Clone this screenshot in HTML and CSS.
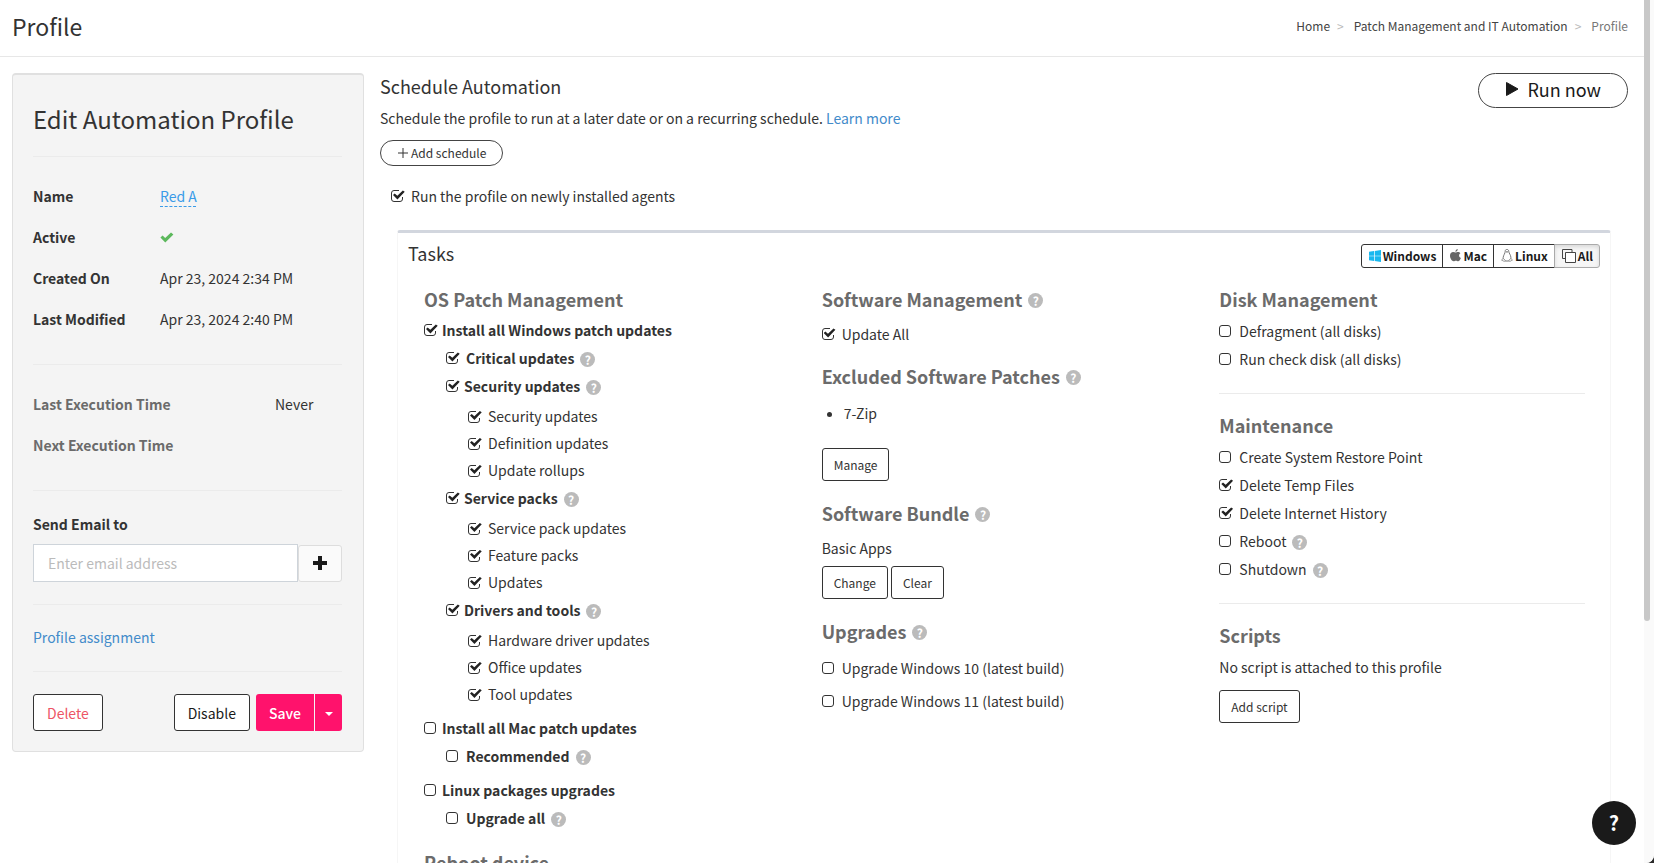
FILE: index.html
```html
<!DOCTYPE html>
<html lang="en">
<head>
    <meta charset="UTF-8">
    <meta name="viewport" content="width=device-width, initial-scale=1.0">
    <title>Profile</title>
    <link rel="stylesheet" href="styles.css">
</head>
<body>
    <header class="page-header">
        <h1>Profile</h1>
        <nav class="breadcrumb">
            <a href="#">Home</a>
            <span class="sep">&gt;</span>
            <a href="#">Patch Management and IT Automation</a>
            <span class="sep">&gt;</span>
            <span class="current">Profile</span>
        </nav>
    </header>

    <div class="content">
        <!-- Left card with the profile details -->
        <aside class="sidebar">
            <h2>Edit Automation Profile</h2>

            <dl class="details">
                <dt>Name</dt>
                <dd><a href="#" class="editable">Red A</a></dd>
                <dt>Active</dt>
                <dd>
                    <svg class="icon-check" width="14" height="11" viewBox="0 0 14 11"><path d="M0.4 5.6 2.6 3.4 5.2 6 11 0.4 13.4 2.6 5.3 10.6Z" fill="#5cb85c"/></svg>
                </dd>
                <dt>Created On</dt>
                <dd>Apr 23, 2024 2:34 PM</dd>
                <dt>Last Modified</dt>
                <dd>Apr 23, 2024 2:40 PM</dd>
            </dl>

            <dl class="details execution">
                <dt>Last Execution Time</dt>
                <dd>Never</dd>
                <dt>Next Execution Time</dt>
                <dd></dd>
            </dl>

            <div class="email">
                <label for="email">Send Email to</label>
                <div class="email-row">
                    <input type="email" id="email" placeholder="Enter email address">
                    <button type="button" class="email-add" aria-label="Add email">
                        <svg width="14" height="14" viewBox="0 0 14 14"><path d="M5 0h4v5h5v4H9v5H5V9H0V5h5z" fill="#1a1a1a"/></svg>
                    </button>
                </div>
            </div>

            <div class="assignment">
                <a href="#">Profile assignment</a>
            </div>

            <div class="actions">
                <button type="button" class="btn btn-delete">Delete</button>
                <div class="actions-right">
                    <button type="button" class="btn">Disable</button>
                    <div class="save-group">
                        <button type="button" class="btn-save">Save</button>
                        <button type="button" class="btn-save btn-caret" aria-label="More save options">
                            <svg width="8" height="4" viewBox="0 0 8 4"><path d="M0 0h8L4 4z" fill="#fff"/></svg>
                        </button>
                    </div>
                </div>
            </div>
        </aside>

        <main class="main">
            <section class="schedule">
                <div>
                    <h3>Schedule Automation</h3>
                    <p>Schedule the profile to run at a later date or on a recurring schedule. <a href="#">Learn more</a></p>
                    <button type="button" class="btn-pill">
                        <svg width="10" height="10" viewBox="0 0 10 10"><path d="M5 0v10M0 5h10" stroke="#333" stroke-width="1"/></svg>
                        Add schedule
                    </button>
                </div>
                <button type="button" class="btn-pill btn-run">
                    <svg width="12" height="14" viewBox="0 0 12 14"><path d="M0.5 0.5v13L12 7z" fill="#1a1a1a" stroke="#1a1a1a" stroke-linejoin="round"/></svg>
                    Run now
                </button>
            </section>

            <label class="check run-new"><input type="checkbox" checked> Run the profile on newly installed agents</label>

            <section class="tasks">
                <div class="tasks-header">
                    <h3>Tasks</h3>
                    <div class="os-filter">
                        <button type="button">
                            <svg width="12" height="12" viewBox="0 0 12 12"><path d="M0 1.8 5 1v4.7H0zM5.7.9 12 0v5.7H5.7zM0 6.3h5V11l-5-.8zM5.7 6.3H12V12l-6.3-.9z" fill="#19b8ef"/></svg>
                            Windows
                        </button>
                        <button type="button">
                            <svg width="11" height="13" viewBox="0 0 11 13"><path d="M7.7 0c.1 1.300-.9 2.700-2.300 2.800C5.200 1.500 6.400.2 7.700 0zM5.600 3.600c.6 0 1.300-.6 2.400-.6 1 0 1.900.5 2.400 1.300-2 1.200-1.700 3.900.5 4.700-.5 1.300-1.600 3.300-2.800 3.300-.8 0-1.200-.5-2.200-.5s-1.400.5-2.200.5C1.900 12.300 0 9.300 0 6.800 0 4.400 1.500 3.100 3.100 3.100c1.100 0 1.900.5 2.500.5z" fill="#666"/></svg>
                            Mac
                        </button>
                        <button type="button">
                            <svg width="12" height="13" viewBox="0 0 12 13"><path d="M4.200 2.300C4.200 1 4.900.4 6 .4s1.700.8 1.800 2.200c.1 1.700 2 3.300 2.100 5.800 0 .8-.2 1.200-.4 1.800L7.400 12H4.600L2.500 10.200c-.3-.6-.4-1-.3-1.800.2-2.300 2-3.900 2-6.100z" fill="#fff" stroke="#777" stroke-width="1"/><path d="M5 2.600h2L6 3.700zM.5 11l1.900-1.600L4.500 12l-1 .6zM11.500 11 9.700 9.400 7.600 12l1 .6z" fill="#fff" stroke="#888" stroke-width=".8"/></svg>
                            Linux
                        </button>
                        <button type="button" class="active">
                            <svg width="14" height="14" viewBox="0 0 14 14"><path d="M3 9.500H.5v-9h9.500V3" fill="none" stroke="#444"/><path d="M3.500 3.500h10v10h-10z" fill="#fff" stroke="#444"/></svg>
                            All
                        </button>
                    </div>
                </div>

                <div class="columns">
                    <div class="column">
                        <h4>OS Patch Management</h4>
                        <ul class="tree">
                            <li>
                                <label class="check"><input type="checkbox" checked>Install all Windows patch updates</label>
                                <ul>
                                    <li><label class="check wide"><input type="checkbox" checked>Critical updates</label><span class="help">?</span></li>
                                    <li>
                                        <label class="check"><input type="checkbox" checked>Security updates</label><span class="help">?</span>
                                        <ul class="leaves">
                                            <li><label class="check wide"><input type="checkbox" checked>Security updates</label></li>
                                            <li><label class="check wide"><input type="checkbox" checked>Definition updates</label></li>
                                            <li><label class="check wide"><input type="checkbox" checked>Update rollups</label></li>
                                        </ul>
                                    </li>
                                    <li>
                                        <label class="check"><input type="checkbox" checked>Service packs</label><span class="help">?</span>
                                        <ul class="leaves">
                                            <li><label class="check wide"><input type="checkbox" checked>Service pack updates</label></li>
                                            <li><label class="check wide"><input type="checkbox" checked>Feature packs</label></li>
                                            <li><label class="check wide"><input type="checkbox" checked>Updates</label></li>
                                        </ul>
                                    </li>
                                    <li>
                                        <label class="check"><input type="checkbox" checked>Drivers and tools</label><span class="help">?</span>
                                        <ul class="leaves">
                                            <li><label class="check wide"><input type="checkbox" checked>Hardware driver updates</label></li>
                                            <li><label class="check wide"><input type="checkbox" checked>Office updates</label></li>
                                            <li><label class="check wide"><input type="checkbox" checked>Tool updates</label></li>
                                        </ul>
                                    </li>
                                </ul>
                            </li>
                            <li>
                                <label class="check"><input type="checkbox">Install all Mac patch updates</label>
                                <ul>
                                    <li><label class="check wide"><input type="checkbox">Recommended</label><span class="help">?</span></li>
                                </ul>
                            </li>
                            <li>
                                <label class="check"><input type="checkbox">Linux packages upgrades</label>
                                <ul>
                                    <li><label class="check wide"><input type="checkbox">Upgrade all</label><span class="help">?</span></li>
                                </ul>
                            </li>
                        </ul>
                        <h4 class="next">Reboot device</h4>
                    </div>

                    <div class="column software">
                        <section>
                            <h4>Software Management <span class="help">?</span></h4>
                            <label class="check wide"><input type="checkbox" checked>Update All</label>
                        </section>
                        <section>
                            <h4>Excluded Software Patches <span class="help">?</span></h4>
                            <ul class="excluded">
                                <li>7-Zip</li>
                            </ul>
                            <button type="button" class="btn-small">Manage</button>
                        </section>
                        <section>
                            <h4>Software Bundle <span class="help">?</span></h4>
                            <p>Basic Apps</p>
                            <div class="btn-row">
                                <button type="button" class="btn-small">Change</button>
                                <button type="button" class="btn-small">Clear</button>
                            </div>
                        </section>
                        <section class="upgrades">
                            <h4>Upgrades <span class="help">?</span></h4>
                            <label class="check wide"><input type="checkbox">Upgrade Windows 10 (latest build)</label>
                            <label class="check wide"><input type="checkbox">Upgrade Windows 11 (latest build)</label>
                        </section>
                    </div>

                    <div class="column system">
                        <section>
                            <h4>Disk Management</h4>
                            <div class="option"><label class="check wide"><input type="checkbox">Defragment (all disks)</label></div>
                            <div class="option"><label class="check wide"><input type="checkbox">Run check disk (all disks)</label></div>
                        </section>
                        <section>
                            <h4>Maintenance</h4>
                            <div class="option"><label class="check wide"><input type="checkbox">Create System Restore Point</label></div>
                            <div class="option"><label class="check wide"><input type="checkbox" checked>Delete Temp Files</label></div>
                            <div class="option"><label class="check wide"><input type="checkbox" checked>Delete Internet History</label></div>
                            <div class="option"><label class="check wide"><input type="checkbox">Reboot</label><span class="help">?</span></div>
                            <div class="option"><label class="check wide"><input type="checkbox">Shutdown</label><span class="help">?</span></div>
                        </section>
                        <section class="scripts">
                            <h4>Scripts</h4>
                            <p>No script is attached to this profile</p>
                            <button type="button" class="btn-small">Add script</button>
                        </section>
                    </div>
                </div>
            </section>
        </main>
    </div>

    <div class="scroll-track"><div class="scroll-thumb"></div></div>
    <button type="button" class="chat" aria-label="Help">?</button>
</body>
</html>
```
FILE: styles.css
```css
* {
    box-sizing: border-box;
}

html {
    background: #2b2b2b;
}

body {
    margin: 0;
    height: 100vh;
    padding-right: 10px;
    overflow: hidden;
    background: #fff;
    border-bottom-right-radius: 8px;
    font-family: "Noto Sans CJK SC", "Open Sans", sans-serif;
    font-size: 14px;
    line-height: 20px;
    color: #333;
}

h1, h2, h3, h4, p, ul, dl, dd {
    margin: 0;
    padding: 0;
}

h1, h2, h3 {
    font-weight: 400;
}

ul {
    list-style: none;
}

a {
    color: #428bca;
    text-decoration: none;
}

button, input {
    font-family: inherit;
    font-size: 14px;
    color: #333;
}

button {
    cursor: pointer;
    padding: 0;
}

svg {
    display: block;
    flex: none;
}

/* Header */
.page-header {
    display: flex;
    justify-content: space-between;
    align-items: center;
    height: 57px;
    padding: 0 16px 5px 12px;
    border-bottom: 1px solid #e7e7e7;
}

.page-header h1 {
    font-size: 23px;
    line-height: 32px;
}

.breadcrumb {
    display: flex;
    gap: 7px;
    font-size: 12px;
}

.breadcrumb a {
    color: #444;
}

.breadcrumb .sep {
    color: #bbb;
    margin-right: 3px;
}

.breadcrumb .current {
    color: #777;
}

.content {
    display: flex;
    align-items: flex-start;
    gap: 16px;
    padding: 16px 16px 0 12px;
}

/* Profile card */
.sidebar {
    flex: none;
    width: 352px;
    padding: 20px 21px 20px 20px;
    background: #f4f4f4;
    border: 1px solid #e0e0e0;
    border-top-width: 2px;
    border-radius: 4px;
}

.sidebar h2 {
    font-size: 24px;
    line-height: 48px;
    padding-bottom: 13px;
}

.details {
    display: grid;
    grid-template-columns: 127px 1fr;
    row-gap: 21px;
    padding: 29px 0 35px;
    border-top: 1px solid #ebebeb;
}

.details dt {
    font-weight: 700;
}

.execution {
    grid-template-columns: 242px 1fr;
}

.execution dt {
    color: #6b6b6b;
}

.editable {
    color: #3a9be8;
    text-decoration: underline dashed 1px;
    text-underline-offset: 4px;
}

.icon-check {
    margin-top: 5px;
}

.email {
    padding: 23px 0 22px;
    border-top: 1px solid #ebebeb;
}

.email label {
    display: block;
    margin-bottom: 10px;
    font-weight: 700;
}

.email-row {
    display: flex;
    align-items: flex-end;
}

.email-row input {
    flex: 1;
    min-width: 0;
    height: 38px;
    padding: 0 14px;
    background: #fff;
    border: 1px solid #ced4da;
}

.email-row input::placeholder {
    color: #bbb;
}

.email-add {
    display: flex;
    align-items: center;
    justify-content: center;
    width: 44px;
    height: 37px;
    padding-bottom: 2px;
    background: #fafafa;
    border: 1px solid #ddd;
    border-radius: 3px;
}

.assignment {
    padding: 22px 0 24px;
    border-top: 1px solid #ebebeb;
}

.actions {
    display: flex;
    justify-content: space-between;
    padding-top: 22px;
    border-top: 1px solid #ebebeb;
}

.actions-right {
    display: flex;
    gap: 6px;
}

.btn {
    height: 37px;
    padding: 0 13px;
    background: #fff;
    border: 1px solid #333;
    border-radius: 3px;
    color: #1a1a1a;
}

.btn-delete {
    color: #ed5565;
}

.save-group {
    display: flex;
    gap: 1px;
}

.btn-save {
    height: 37px;
    padding: 0 13px;
    background: #ff126c;
    border: 0;
    border-radius: 3px 0 0 3px;
    color: #fff;
    font-weight: 500;
}

.btn-caret {
    padding: 2px 9px 0 10px;
    border-radius: 0 3px 3px 0;
}

/* Schedule */
.main {
    flex: 1;
    min-width: 0;
}

.schedule {
    display: flex;
    justify-content: space-between;
    align-items: flex-start;
}

.schedule h3 {
    font-size: 18px;
    line-height: 26px;
}

.schedule p {
    margin: 9px 0 12px;
}

.btn-pill {
    display: flex;
    align-items: center;
    gap: 3px;
    height: 26px;
    padding: 0 16px 1px 17px;
    background: #fff;
    border: 1px solid #444;
    border-radius: 18px;
    font-size: 12px;
}

.btn-run {
    gap: 9px;
    height: 35px;
    padding: 0 26px 3px 27px;
    color: #1a1a1a;
    font-size: 18px;
}

/* Tick boxes */
.check {
    display: inline-flex;
    align-items: center;
    gap: 6px;
    cursor: pointer;
}

.check.wide {
    gap: 8px;
}

.check input {
    appearance: none;
    position: relative;
    flex: none;
    width: 12px;
    height: 12px;
    margin: 0;
    background: #fff;
    border: 1px solid #333;
    border-radius: 3px;
}

.check input:checked::before {
    content: "";
    position: absolute;
    top: -1px;
    right: -1px;
    width: 4px;
    height: 7px;
    background: #fff;
}

.check input:checked::after {
    content: "";
    position: absolute;
    left: 1px;
    top: -1px;
    width: 12px;
    height: 10px;
    background: #222;
    clip-path: polygon(0 50%, 14% 34%, 36% 58%, 82% 4%, 98% 18%, 37% 94%);
}

.run-new {
    margin: 20px 0 0 11px;
    gap: 8px;
}

.help {
    display: inline-flex;
    align-items: center;
    justify-content: center;
    width: 15px;
    height: 15px;
    margin: 3px 0 0 6px;
    background: #bbb;
    border-radius: 50%;
    color: #fff;
    font-size: 12px;
    font-weight: 700;
    line-height: 14px;
}

/* Tasks panel */
.tasks {
    margin: 24px 17px 0;
    border: 1px solid #f6f6f6;
    border-top: 3px solid #d2d6de;
    border-radius: 3px;
}

.tasks-header {
    display: flex;
    justify-content: space-between;
    padding: 11px 10px 0;
}

.tasks-header h3 {
    font-size: 18px;
    line-height: 18px;
}

.os-filter {
    display: flex;
}

.os-filter button {
    display: flex;
    align-items: center;
    gap: 2px;
    height: 24px;
    padding: 0 6px 1px 7px;
    margin-left: -1px;
    background: #fff;
    border: 1px solid #333;
    color: #1a1a1a;
    font-size: 12px;
    font-weight: 700;
}

.os-filter button:first-child {
    border-radius: 3px 0 0 3px;
}

.os-filter button:last-child {
    border-radius: 0 3px 3px 0;
}

.os-filter .active {
    background: #f6f6f6;
    border-color: #aaa;
    box-shadow: inset 0 2px 4px rgba(0, 0, 0, .12);
}

.columns {
    display: grid;
    grid-template-columns: repeat(3, 1fr);
    gap: 32px;
    padding: 17px 25px 40px 26px;
}

h4 {
    display: flex;
    align-items: center;
    font-size: 18px;
    font-weight: 700;
    line-height: 28px;
    color: #6b6b6b;
}

.column .next {
    margin-top: 16px;
}

.tree {
    margin-top: 3px;
    font-weight: 700;
    line-height: 28px;
}

.tree > li + li {
    margin-top: 6px;
}

.tree li {
    display: flex;
    flex-wrap: wrap;
    align-items: center;
}

.tree ul {
    width: 100%;
    padding-left: 22px;
}

.tree .leaves {
    margin-top: 3px;
    font-weight: 400;
    line-height: 27px;
}

.software section + section {
    margin-top: 18px;
}

.software .check {
    display: flex;
    margin-top: 11px;
}

.software .upgrades .check {
    margin-top: 13px;
}

.excluded {
    margin: 13px 0 25px 22px;
    list-style: disc;
}

.software p {
    margin: 11px 0 8px;
}

.btn-row {
    display: flex;
    gap: 3px;
}

.btn-small {
    height: 33px;
    padding: 0 11px 1px;
    background: #fff;
    border: 1px solid #333;
    border-radius: 3px;
    font-size: 12px;
}

.system section + section {
    margin-top: 20px;
    padding-top: 17px;
    border-top: 1px solid #ebebeb;
}

.option {
    display: flex;
    align-items: center;
    height: 28px;
}

.system h4 {
    margin-bottom: 4px;
}

.scripts p {
    margin: 8px 0 13px;
}

/* Page scrollbar and help bubble */
.scroll-track {
    position: fixed;
    top: 0;
    right: 0;
    bottom: 0;
    width: 10px;
    background: #fafafa;
    border-bottom-right-radius: 8px;
}

.scroll-thumb {
    width: 6px;
    height: 72%;
    background: #c8c8c8;
    border-radius: 0 0 3px 3px;
}

.chat {
    position: fixed;
    right: 18px;
    bottom: 18px;
    width: 44px;
    height: 44px;
    background: #1a1a1a;
    border: 0;
    border-radius: 50%;
    color: #fff;
    font-size: 20px;
    font-weight: 700;
    line-height: 44px;
}
```
